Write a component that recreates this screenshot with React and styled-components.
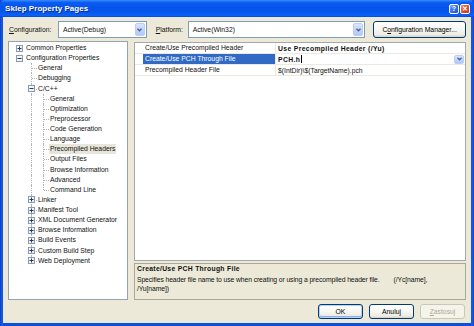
import React from 'react';
import styled, { createGlobalStyle, css } from 'styled-components';

const Global = createGlobalStyle`
  html, body { margin: 0; padding: 0; background: #0b4fdc; }
  body { font-family: "Liberation Sans", Arial, sans-serif; }
  * { box-sizing: border-box; }
`;

const Window = styled.div`
  width: 474px;
  height: 326px;
  display: flex;
  flex-direction: column;
  background: linear-gradient(to right, #0a3fc8 0px, #1a5ee8 2px, #0c4fdc 3px, #0c4fdc 471px, #1a5ee8 472px, #0a3fc8 474px);
  overflow: hidden;
`;

const TitleBar = styled.div`
  height: 17px;
  flex: none;
  display: flex;
  align-items: center;
  padding: 0 4px 0 5px;
  background: linear-gradient(to bottom, #3b8dff 0%, #0a5cf2 15%, #0653ea 45%, #0558ec 75%, #0a62fb 90%, #0048d6 100%);
  border-radius: 5px 5px 0 0;
`;

const Title = styled.div`
  flex: 1;
  color: #fff;
  font-weight: 700;
  font-size: 8px;
  letter-spacing: 0.05px;
  text-shadow: 1px 1px 0 #0a2a8a;
  white-space: nowrap;
`;

const CaptionButton = styled.div`
  width: 10px;
  height: 10px;
  margin-left: 1px;
  border: 1px solid #fff;
  border-radius: 2px;
  display: flex;
  align-items: center;
  justify-content: center;
  color: #fff;
  font-size: 7px;
  font-weight: 700;
  line-height: 1;
  background: ${p => p.$kind === 'close'
    ? 'linear-gradient(135deg, #f09070 0%, #e2512a 45%, #c8391a 100%)'
    : 'linear-gradient(135deg, #7fa8f8 0%, #3d74e8 45%, #2257d6 100%)'};
`;

const Body = styled.div`
  flex: 1;
  margin: 0 3px 3px 3px;
  background: #ece9d8;
  display: flex;
  flex-direction: column;
  padding: 4px 5px 4px 5px;
  font-size: 6.8px;
  color: #111;
`;

const TopRow = styled.div`
  height: 17px;
  display: flex;
  align-items: center;
  flex: none;
`;

const FieldLabel = styled.div`
  width: ${p => p.$w}px;
  margin-left: ${p => p.$ml || 0}px;
  white-space: nowrap;
`;

const U = styled.span`
  text-decoration: underline;
`;

const Combo = styled.div`
  width: ${p => p.$w}px;
  height: 17px;
  border: 1px solid #7f9db9;
  background: #fff;
  display: flex;
  align-items: center;
  padding: 1px;
  padding-left: 4px;
`;

const ComboText = styled.div`
  flex: 1;
  white-space: nowrap;
`;

const DropButton = styled.div`
  width: ${p => p.$w || 10}px;
  height: ${p => p.$h || 13}px;
  border: 1px solid #b9cdf6;
  border-radius: 2px;
  background: linear-gradient(to bottom, #dbe6fd 0%, #c2d4fb 50%, #b4c9f6 100%);
  display: flex;
  align-items: center;
  justify-content: center;
`;

const Chevron = () => (
  <svg width="5" height="4" viewBox="0 0 5 4">
    <polyline points="0.5,0.8 2.5,2.8 4.5,0.8" fill="none" stroke="#4d6185" strokeWidth="1.3" />
  </svg>
);

const Button = styled.div`
  width: ${p => p.$w}px;
  height: ${p => p.$h || 15}px;
  margin-left: ${p => p.$ml || 0}px;
  border: 1px solid ${p => (p.$disabled ? '#c9c7ba' : '#003c74')};
  border-radius: 3px;
  background: ${p => (p.$disabled
    ? '#f5f4ea'
    : 'linear-gradient(to bottom, #ffffff 0%, #f6f6f2 50%, #ecebe5 85%, #d6d0c5 100%)')};
  color: ${p => (p.$disabled ? '#aca899' : '#000')};
  display: flex;
  align-items: center;
  justify-content: center;
  white-space: nowrap;
  ${p => p.$default && css`
    box-shadow: inset 0 0 0 1px #b7d0f6, inset 0 -1px 0 1px #8fb0ec;
  `}
`;

const Main = styled.div`
  flex: 1;
  display: flex;
  margin-top: 3px;
  min-height: 0;
`;

const Tree = styled.div`
  width: 120px;
  background: #fff;
  border: 1px solid #97a3b2;
  padding: 1px 0 0 4px;
  flex: none;
`;

const TreeRow = styled.div`
  display: flex;
  height: 10.14px;
  align-items: stretch;
`;

const Indent = styled.div`
  width: 12px;
  flex: none;
  position: relative;
  ${p => p.$v && css`
    &::before {
      content: '';
      position: absolute;
      left: 6px;
      top: 0;
      bottom: 0;
      border-left: 1px dotted #b4b4b4;
    }
  `}
`;

const Knob = styled.div`
  width: 12px;
  flex: none;
  position: relative;
  display: flex;
  align-items: center;
  ${p => p.$lines && css`
    &::before {
      content: '';
      position: absolute;
      left: 6px;
      top: 0;
      bottom: ${p.$last ? '50%' : '0'};
      border-left: 1px dotted #b4b4b4;
    }
    &::after {
      content: '';
      position: absolute;
      left: 7px;
      right: 0;
      top: 50%;
      border-top: 1px dotted #b4b4b4;
    }
  `}
`;

const ExpandBox = styled.div`
  position: relative;
  z-index: 1;
  margin-left: 3px;
  width: 7px;
  height: 7px;
  border: 1px solid #8a9cb3;
  background: linear-gradient(135deg, #ffffff 0%, #ece9df 100%);
  display: flex;
  align-items: center;
  justify-content: center;
`;

const TreeLabel = styled.div`
  line-height: 10px;
  padding: 0 1px;
  white-space: nowrap;
  align-self: center;
  background: ${p => (p.$sel ? '#e8e5da' : 'transparent')};
`;

const Right = styled.div`
  flex: 1;
  margin-left: 6px;
  display: flex;
  flex-direction: column;
`;

const Grid = styled.div`
  flex: 1;
  margin-top: 1px;
  background: #fff;
  border: 1px solid #a4a7ab;
  display: flex;
  flex-direction: column;
`;

const GridRow = styled.div`
  display: flex;
  height: 11px;
  border-bottom: 1px solid #ebe9e0;
`;

const Gutter = styled.div`
  width: 8px;
  flex: none;
`;

const NameCell = styled.div`
  width: 133px;
  flex: none;
  padding-left: 2px;
  line-height: 10px;
  white-space: nowrap;
  border-right: 1px solid #ebe9e0;
  background: ${p => (p.$sel ? '#316ac5' : '#fff')};
  color: ${p => (p.$sel ? '#fff' : '#111')};
`;

const ValueCell = styled.div`
  flex: 1;
  display: flex;
  align-items: center;
  padding: 0 1px 0 2px;
  white-space: nowrap;
  font-weight: ${p => (p.$bold ? 700 : 400)};
  letter-spacing: ${p => (p.$bold ? '0.35px' : '0')};
`;

const Caret = styled.span`
  display: inline-block;
  width: 1px;
  height: 8px;
  background: #000;
  margin-left: 1px;
  vertical-align: middle;
`;

const Spacer = styled.div`
  flex: 1;
`;

const Desc = styled.div`
  height: 37px;
  margin-top: 2px;
  flex: none;
  border: 1px solid #aca899;
  padding: 0 2px;
  line-height: 9px;
`;

const DescTitle = styled.div`
  font-weight: 700;
  letter-spacing: 0.3px;
`;

const DescText = styled.div`
  margin-top: 2px;
  white-space: nowrap;
  letter-spacing: -0.1px;
`;

const Gap = styled.span`
  display: inline-block;
  width: ${p => p.$w}px;
`;

const Footer = styled.div`
  display: flex;
  justify-content: flex-end;
  margin-top: 4px;
  padding-right: 1px;
  flex: none;
`;

const PlusMinus = ({ minus }) => (
  <svg width="5" height="5" viewBox="0 0 5 5">
    <line x1="0.5" y1="2.5" x2="4.5" y2="2.5" stroke="#243c6a" strokeWidth="1" />
    {!minus && <line x1="2.5" y1="0.5" x2="2.5" y2="4.5" stroke="#243c6a" strokeWidth="1" />}
  </svg>
);

const tree = [
  { label: 'Common Properties', level: 0, box: 'plus' },
  { label: 'Configuration Properties', level: 0, box: 'minus' },
  { label: 'General', level: 1 },
  { label: 'Debugging', level: 1 },
  { label: 'C/C++', level: 1, box: 'minus' },
  { label: 'General', level: 2 },
  { label: 'Optimization', level: 2 },
  { label: 'Preprocessor', level: 2 },
  { label: 'Code Generation', level: 2 },
  { label: 'Language', level: 2 },
  { label: 'Precompiled Headers', level: 2, sel: true },
  { label: 'Output Files', level: 2 },
  { label: 'Browse Information', level: 2 },
  { label: 'Advanced', level: 2 },
  { label: 'Command Line', level: 2, last: true },
  { label: 'Linker', level: 1, box: 'plus' },
  { label: 'Manifest Tool', level: 1, box: 'plus' },
  { label: 'XML Document Generator', level: 1, box: 'plus' },
  { label: 'Browse Information', level: 1, box: 'plus' },
  { label: 'Build Events', level: 1, box: 'plus' },
  { label: 'Custom Build Step', level: 1, box: 'plus' },
  { label: 'Web Deployment', level: 1, box: 'plus', last: true },
];

const rows = [
  { name: 'Create/Use Precompiled Header', value: 'Use Precompiled Header (/Yu)', bold: true },
  { name: 'Create/Use PCH Through File', value: 'PCH.h', bold: true, sel: true },
  { name: 'Precompiled Header File', value: '$(IntDir)\\$(TargetName).pch' },
];

export default function App() {
  return (
    <>
      <Global />
      <Window>
        <TitleBar>
          <Title>Sklep Property Pages</Title>
          <CaptionButton $kind="help">?</CaptionButton>
          <CaptionButton $kind="close">✕</CaptionButton>
        </TitleBar>
        <Body>
          <TopRow>
            <FieldLabel $w={49} $ml={1}><U>C</U>onfiguration:</FieldLabel>
            <Combo $w={89}>
              <ComboText>Active(Debug)</ComboText>
              <DropButton><Chevron /></DropButton>
            </Combo>
            <FieldLabel $w={32} $ml={9}><U>P</U>latform:</FieldLabel>
            <Combo $w={178}>
              <ComboText>Active(Win32)</ComboText>
              <DropButton><Chevron /></DropButton>
            </Combo>
            <Button $w={93} $h={17} $ml={8}>C<U>o</U>nfiguration Manager...</Button>
          </TopRow>
          <Main>
            <Tree>
              {tree.map((t, i) => {
                const indents = [];
                for (let l = 0; l < t.level; l++) {
                  indents.push(<Indent key={l} $v={l === 1 && t.level === 2} />);
                }
                return (
                  <TreeRow key={i}>
                    {indents}
                    <Knob $lines={t.level > 0} $last={t.last}>
                      {t.box && <ExpandBox><PlusMinus minus={t.box === 'minus'} /></ExpandBox>}
                    </Knob>
                    <TreeLabel $sel={t.sel}>{t.label}</TreeLabel>
                  </TreeRow>
                );
              })}
            </Tree>
            <Right>
              <Grid>
                {rows.map((r, i) => (
                  <GridRow key={i}>
                    <Gutter />
                    <NameCell $sel={r.sel}>{r.name}</NameCell>
                    <ValueCell $bold={r.bold}>
                      {r.value}
                      {r.sel && <Caret />}
                      {r.sel && <Spacer />}
                      {r.sel && <DropButton $w={10} $h={9}><Chevron /></DropButton>}
                    </ValueCell>
                  </GridRow>
                ))}
              </Grid>
              <Desc>
                <DescTitle>Create/Use PCH Through File</DescTitle>
                <DescText>
                  Specifies header file name to use when creating or using a precompiled header file.<Gap $w={14} />(/Yc[name],
                  <br />
                  /Yu[name])
                </DescText>
              </Desc>
            </Right>
          </Main>
          <Footer>
            <Button $w={45} $default>OK</Button>
            <Button $w={45} $ml={6}>Anuluj</Button>
            <Button $w={45} $ml={6} $disabled><U>Z</U>astosuj</Button>
          </Footer>
        </Body>
      </Window>
    </>
  );
}
